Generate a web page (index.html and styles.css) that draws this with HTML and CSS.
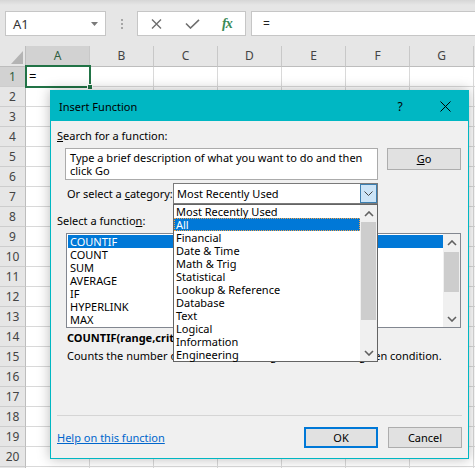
FILE: index.html
```html
<!DOCTYPE html>
<html>
<head>
<meta charset="utf-8">
<link rel="stylesheet" href="styles.css">
</head>
<body>
<div class="app">
  <div class="toolbar">
    <div class="namebox">
      <span class="nb-text">A1</span>
      <svg class="nb-caret" width="7" height="4" viewBox="0 0 7 4"><path d="M0 0H7L3.5 4Z" fill="#7a7a7a"/></svg>
    </div>
    <div class="grip"><i></i><i></i><i></i></div>
    <div class="fbtns">
      <svg class="fb-x" width="11" height="10" viewBox="0 0 11 10"><path d="M1 0.5L10 9.5M10 0.5L1 9.5" stroke="#6e6e6e" stroke-width="1.4" fill="none"/></svg>
      <svg class="fb-check" width="15" height="10" viewBox="0 0 15 10"><path d="M1 4.5L5.5 9L14 0.8" stroke="#6e6e6e" stroke-width="1.6" fill="none"/></svg>
      <span class="fb-fx">fx</span>
    </div>
    <div class="finput">=</div>
  </div>

  <div class="sheet">
    <div class="corner"><svg width="12" height="13" viewBox="0 0 12 13"><path d="M12 0V13H0Z" fill="#b4b4b4"/></svg></div>
    <div class="colheads">
      <div class="ch active">A</div>
      <div class="ch">B</div>
      <div class="ch">C</div>
      <div class="ch">D</div>
      <div class="ch">E</div>
      <div class="ch">F</div>
      <div class="ch">G</div>
      <div class="ch"></div>
    </div>
    <div class="rowheads">
      <div class="rh active">1</div>
      <div class="rh">2</div>
      <div class="rh">3</div>
      <div class="rh">4</div>
      <div class="rh">5</div>
      <div class="rh">6</div>
      <div class="rh">7</div>
      <div class="rh">8</div>
      <div class="rh">9</div>
      <div class="rh">10</div>
      <div class="rh">11</div>
      <div class="rh">12</div>
      <div class="rh">13</div>
      <div class="rh">14</div>
      <div class="rh">15</div>
      <div class="rh">16</div>
      <div class="rh">17</div>
      <div class="rh">18</div>
      <div class="rh">19</div>
      <div class="rh">20</div>
      <div class="rh"></div>
    </div>
    <div class="cells">
      <div class="active-cell"><span class="cell-text">=</span><i class="fill-handle"></i></div>
    </div>
  </div>

  <div class="dialog">
    <div class="dlg-title">
      <span class="dlg-name">Insert Function</span>
      <span class="dlg-help">?</span>
      <svg class="dlg-close" width="11" height="11" viewBox="0 0 11 11"><path d="M0.5 0.5L10.5 10.5M10.5 0.5L0.5 10.5" stroke="#000" stroke-width="1" fill="none"/></svg>
    </div>
    <div class="dlg-body">
      <div class="lbl"><u>S</u>earch for a function:</div>
      <div class="search-row">
        <div class="textbox">Type a brief description of what you want to do and then<br>click Go</div>
        <div class="btn go"><u>G</u>o</div>
      </div>
      <div class="cat-row">
        <span class="cat-lbl">Or select a <u>c</u>ategory:</span>
        <div class="combo">
          <span class="combo-text">Most Recently Used</span>
          <span class="combo-btn"><svg width="9" height="5" viewBox="0 0 9 5"><path d="M0.5 0.5L4.5 4.5L8.5 0.5" stroke="#444" stroke-width="1" fill="none"/></svg></span>
          <div class="droplist">
            <div class="dl-items">
              <div class="item">Most Recently Used</div>
              <div class="item sel focus">All</div>
              <div class="item">Financial</div>
              <div class="item">Date &amp; Time</div>
              <div class="item">Math &amp; Trig</div>
              <div class="item">Statistical</div>
              <div class="item">Lookup &amp; Reference</div>
              <div class="item">Database</div>
              <div class="item">Text</div>
              <div class="item">Logical</div>
              <div class="item">Information</div>
              <div class="item">Engineering</div>
            </div>
            <div class="vscroll">
              <span class="sb-btn"><svg width="10" height="6" viewBox="0 0 10 6"><path d="M1 5L5 1L9 5" stroke="#606060" stroke-width="1.6" fill="none"/></svg></span>
              <div class="track"><div class="thumb dl-thumb"></div></div>
              <span class="sb-btn"><svg width="10" height="6" viewBox="0 0 10 6"><path d="M1 1L5 5L9 1" stroke="#606060" stroke-width="1.6" fill="none"/></svg></span>
            </div>
          </div>
        </div>
      </div>
      <div class="lbl fn-lbl">Select a functio<u>n</u>:</div>
      <div class="listbox">
        <div class="lb-items">
          <div class="item sel">COUNTIF</div>
          <div class="item">COUNT</div>
          <div class="item">SUM</div>
          <div class="item">AVERAGE</div>
          <div class="item">IF</div>
          <div class="item">HYPERLINK</div>
          <div class="item">MAX</div>
        </div>
        <div class="vscroll">
          <span class="sb-btn"><svg width="10" height="6" viewBox="0 0 10 6"><path d="M1 5L5 1L9 5" stroke="#606060" stroke-width="1.6" fill="none"/></svg></span>
          <div class="track"><div class="thumb lb-thumb"></div></div>
          <span class="sb-btn"><svg width="10" height="6" viewBox="0 0 10 6"><path d="M1 1L5 5L9 1" stroke="#606060" stroke-width="1.6" fill="none"/></svg></span>
        </div>
      </div>
      <div class="syntax">COUNTIF(range,criteria)</div>
      <div class="desc">Counts the number of cells within a range that meet the given condition.</div>
      <div class="sep"></div>
      <div class="footer">
        <a class="help">Help on this function</a>
        <div class="btn ok">OK</div>
        <div class="btn cancel">Cancel</div>
      </div>
    </div>
  </div>
</div>
</body>
</html>
```

FILE: styles.css
```css
* { box-sizing: border-box; }
html, body { margin: 0; padding: 0; }
body {
  width: 475px;
  height: 468px;
  overflow: hidden;
  background: #fff;
  font-family: "Noto Sans", "Segoe UI", sans-serif;
}
.app {
  position: relative;
  width: 475px;
  height: 468px;
  overflow: hidden;
}

/* ---------- formula toolbar ---------- */
.toolbar {
  height: 46px;
  background: linear-gradient(#d6d6d6, #e6e6e6 5px);
  display: flex;
  align-items: flex-start;
  padding-top: 11px;
}
.namebox {
  margin-left: 5px;
  width: 101px;
  height: 25px;
  background: #fff;
  border: 1px solid #c6c6c6;
  display: flex;
  align-items: center;
  padding: 0 7px 0 7px;
}
.nb-text { flex: 1; font-size: 13px; color: #333; }
.grip {
  width: 31px;
  height: 25px;
  display: flex;
  flex-direction: column;
  align-items: center;
  justify-content: center;
  gap: 2px;
}
.grip i { display: block; width: 2px; height: 2px; background: #a6a6a6; }
.fbtns {
  width: 109px;
  height: 25px;
  background: #fff;
  border: 1px solid #c6c6c6;
  display: flex;
  align-items: center;
  padding-left: 13px;
}
.fb-check { margin-left: 23px; }
.fb-fx {
  margin-left: 22px;
  font-family: "Liberation Serif", serif;
  font-style: italic;
  font-weight: bold;
  font-size: 14px;
  color: #3b8a56;
  letter-spacing: -1px;
}
.finput {
  flex: 1;
  margin-left: 5px;
  margin-right: -4px;
  height: 25px;
  background: #fff;
  border: 1px solid #c6c6c6;
  font-size: 12px;
  line-height: 23px;
  padding-left: 11px;
  color: #222;
}

/* ---------- sheet ---------- */
.sheet {
  display: grid;
  grid-template-columns: 26px 1fr;
  grid-template-rows: 21px 1fr;
  height: 422px;
  font-size: 12px;
  color: #444;
}
.corner {
  background: #e6e6e6;
  border-right: 1px solid #bdbdbd;
  border-bottom: 1px solid #bdbdbd;
  display: flex;
  align-items: flex-end;
  justify-content: flex-end;
  padding: 0 2px 2px 0;
}
.colheads { display: flex; background: #e6e6e6; }
.ch {
  flex: none;
  width: 64px;
  height: 21px;
  border-right: 1px solid #c8c8c8;
  border-bottom: 1px solid #bdbdbd;
  text-align: center;
  line-height: 20px;
}
.ch.active { background: #d2d2d2; color: #2f5e3f; border-bottom: 1px solid #217346; }
.rowheads { display: flex; flex-direction: column; background: #e6e6e6; }
.rh {
  flex: none;
  height: 20px;
  border-right: 1px solid #bdbdbd;
  border-bottom: 1px solid #cdcdcd;
  text-align: center;
  line-height: 19px;
}
.rh.active { background: #d2d2d2; color: #2f5e3f; }
.cells {
  position: relative;
  background-color: #fff;
  background-image:
    linear-gradient(to right, transparent 63px, #d9d9d9 63px),
    linear-gradient(to bottom, transparent 19px, #d9d9d9 19px);
  background-size: 64px 100%, 100% 20px;
}
.active-cell {
  position: absolute;
  left: -1px;
  top: -2px;
  width: 66px;
  height: 23px;
  border: 2px solid #217346;
  font-size: 13px;
  color: #000;
  line-height: 18px;
  padding-left: 2px;
}
.fill-handle {
  position: absolute;
  right: -4px;
  bottom: -4px;
  width: 6px;
  height: 6px;
  background: #217346;
  border: 1px solid #fff;
}

/* ---------- dialog ---------- */
.dialog {
  position: absolute;
  left: 50px;
  top: 90px;
  width: 419px;
  height: 369px;
  border: 1px solid #00b7c3;
  background: #f0f0f0;
  box-shadow: 0 0 12px rgba(0, 0, 0, 0.28);
  font-size: 11px;
  color: #000;
  display: flex;
  flex-direction: column;
}
.dlg-title {
  flex: none;
  height: 30px;
  background: #00b7c3;
  display: flex;
  align-items: center;
  padding-left: 8px;
  font-size: 11px;
}
.dlg-name { flex: 1; }
.dlg-help { width: 12px; text-align: center; margin-right: 34px; font-size: 12px; }
.dlg-close { margin-right: 17px; }

.dlg-body {
  flex: 1;
  padding: 0 6px;
  display: flex;
  flex-direction: column;
  line-height: 15px;
}
.lbl { margin-top: 7px; }
.search-row { display: flex; align-items: flex-start; margin-top: 5px; }
.textbox {
  margin-left: 8px;
  width: 313px;
  height: 32px;
  background: #fff;
  border: 1px solid #ababab;
  padding: 2px 4px;
  line-height: 13px;
  white-space: nowrap;
  overflow: hidden;
}
.btn {
  width: 74px;
  height: 22px;
  background: #e1e1e1;
  border: 1px solid #adadad;
  text-align: center;
  line-height: 20px;
}
.go { margin-left: 9px; }
.cat-row { display: flex; align-items: center; margin-top: 3px; height: 21px; }
.cat-lbl { margin-left: 10px; width: 106px; white-space: nowrap; }
.combo {
  position: relative;
  width: 205px;
  height: 21px;
  background: #fff;
  border: 1px solid #7a7a7a;
  display: flex;
  align-items: center;
  padding-left: 3px;
}
.combo-text { flex: 1; }
.combo-btn {
  align-self: stretch;
  width: 17px;
  background: #cce4f7;
  border: 1px solid #3c7fb1;
  display: flex;
  align-items: center;
  justify-content: center;
}
.droplist {
  position: absolute;
  left: -1px;
  top: 20px;
  width: 205px;
  height: 158px;
  background: #fff;
  border: 1px solid #646464;
  display: flex;
  z-index: 2;
}
.dl-items { flex: 1; }
.item {
  height: 13px;
  line-height: 13px;
  padding-left: 2px;
  white-space: nowrap;
}
.item.sel { background: #0078d7; color: #fff; }
.item.focus { outline: 1px dotted #f2a24a; outline-offset: -1px; }

.vscroll {
  flex: none;
  width: 17px;
  background: #f0f0f0;
  display: flex;
  flex-direction: column;
}
.sb-btn {
  flex: none;
  height: 17px;
  display: flex;
  align-items: center;
  justify-content: center;
}
.track { flex: 1; }
.thumb { margin: 0 1px; background: #cdcdcd; }
.dl-thumb { height: 98px; }
.lb-thumb { height: 40px; margin-top: 1px; }

.fn-lbl { margin-top: 9px; }
.listbox {
  margin-left: 9px;
  margin-top: 5px;
  width: 395px;
  height: 95px;
  background: #fff;
  border: 1px solid #828790;
  display: flex;
  overflow: hidden;
}
.lb-items { flex: 1; padding: 1px 0 0 1px; }
.lb-items .item { padding-left: 2px; }
.syntax { margin-top: 2px; margin-left: 10px; font-weight: bold; }
.desc { margin-top: 3px; margin-left: 10px; white-space: nowrap; }
.sep { margin-top: 52px; height: 1px; background: #d5d5d5; }
.footer { display: flex; align-items: center; margin-top: 11px; }
.help { flex: 1; color: #0066cc; text-decoration: underline; }
.ok { height: 21px; border: 2px solid #0078d7; line-height: 17px; }
.cancel { height: 21px; margin-left: 10px; line-height: 19px; }
```
